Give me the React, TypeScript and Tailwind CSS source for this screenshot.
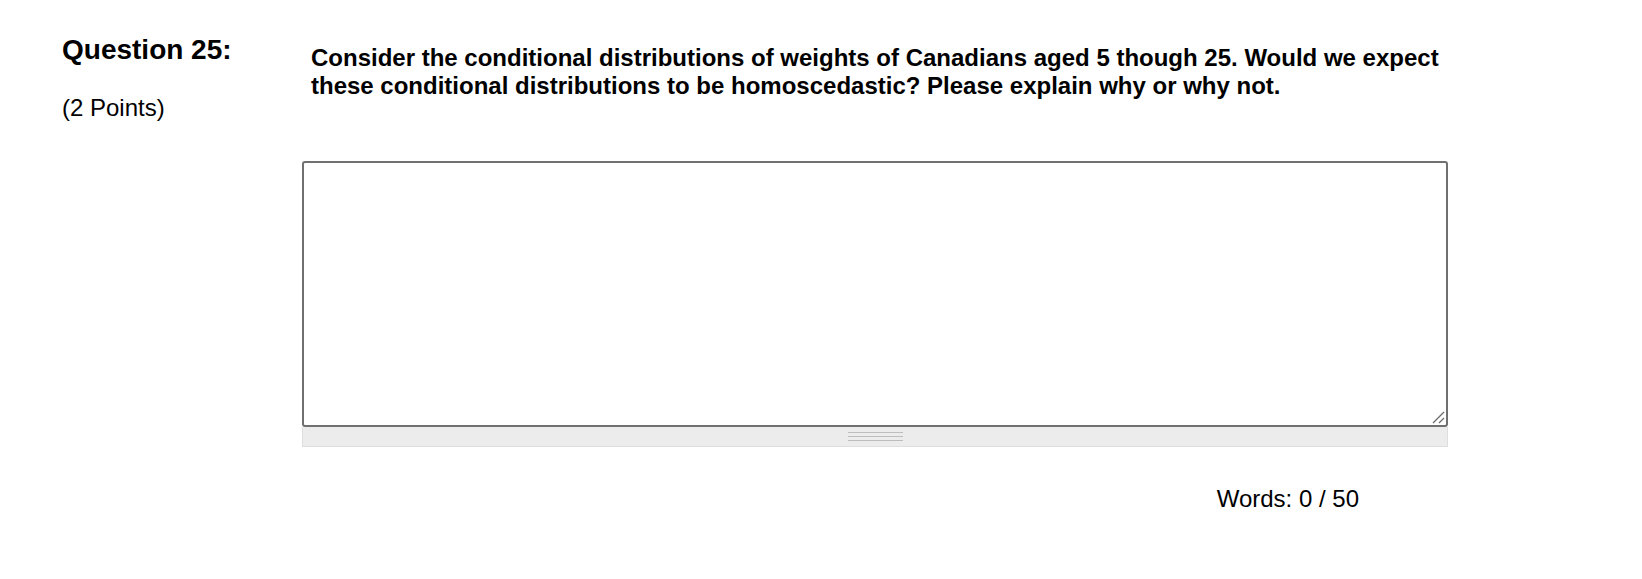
const ResizeHandle = () => (
  <svg
    className="absolute right-[3px] bottom-[3px]"
    width="14"
    height="14"
    viewBox="0 0 14 14"
  >
    <path d="M2 13 L13 2" stroke="#6b6b6b" strokeWidth="1.3" />
    <path d="M8 13 L13 8" stroke="#6b6b6b" strokeWidth="1.3" />
  </svg>
)

const QuestionBlock = () => {
  return (
    <div className="flex">
      <div className="w-[240px] shrink-0">
        <div className="text-[28px] leading-[32px] font-bold text-black">
          Question 25:
        </div>
        <div className="mt-[28px] text-[24px] leading-[28px] text-black">
          (2 Points)
        </div>
      </div>

      <div className="flex flex-col">
        <p className="pt-[10px] pl-[9px] w-[1170px] text-[24px] leading-[28px] font-bold text-black">
          Consider the conditional distributions of weights of Canadians aged 5
          though 25. Would we expect these conditional distributions to be
          homoscedastic? Please explain why or why not.
        </p>

        <div className="mt-[61px] w-[1146px]">
          <div className="relative">
            <textarea className="block w-full h-[266px] border-2 border-[#707070] rounded-[3px] bg-white resize-none outline-none" />
            <ResizeHandle />
          </div>
          <div className="h-[20px] bg-[#ececec] border-b border-x border-[#dedede] flex items-center justify-center">
            <div className="w-[55px] flex flex-col gap-[3px]">
              <div className="h-px bg-[#bdbdbd]" />
              <div className="h-px bg-[#bdbdbd]" />
              <div className="h-px bg-[#bdbdbd]" />
            </div>
          </div>
          <div className="mt-[38px] pr-[89px] flex justify-end text-[24px] leading-[28px] text-black">
            Words: 0 / 50
          </div>
        </div>
      </div>
    </div>
  )
}

export default function App() {
  return (
    <div className="w-[1642px] h-[579px] bg-white pl-[62px] pt-[34px] font-['Liberation_Sans',Arial,sans-serif]">
      <QuestionBlock />
    </div>
  )
}
